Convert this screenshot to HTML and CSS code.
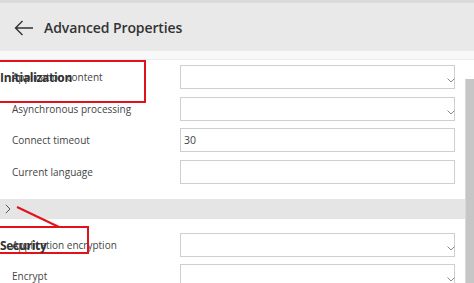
FILE: index.html
```html
<!DOCTYPE html>
<html>
<head>
<meta charset="utf-8">
<link rel="stylesheet" href="styles.css">
</head>
<body>
<div class="app">
  <header class="topbar">
    <svg class="back" width="20" height="16" viewBox="0 0 20 16"><path d="M19 8H1.5M8.5 1L1.5 8l7 7" fill="none" stroke="#333" stroke-width="1.4"/></svg>
    <h1 class="title">Advanced Properties</h1>
  </header>
  <div class="strip"></div>
  <div class="main">
    <div class="content">
      <div class="rows">
        <div class="row"><span class="label">Application content</span><div class="field select"><svg class="chev" width="8" height="5" viewBox="0 0 8 5"><path d="M0.5 0.5L4 4l3.5-3.5" fill="none" stroke="#888" stroke-width="1"/></svg></div></div>
        <div class="row"><span class="label">Asynchronous processing</span><div class="field select"><svg class="chev" width="8" height="5" viewBox="0 0 8 5"><path d="M0.5 0.5L4 4l3.5-3.5" fill="none" stroke="#888" stroke-width="1"/></svg></div></div>
        <div class="row"><span class="label">Connect timeout</span><div class="field text">30</div></div>
        <div class="row"><span class="label">Current language</span><div class="field text"></div></div>
      </div>
      <div class="section">
        <svg width="6" height="10" viewBox="0 0 6 10"><path d="M0.8 0.8L5 5L0.8 9.2" fill="none" stroke="#555" stroke-width="1"/></svg>
      </div>
      <div class="rows">
        <div class="row"><span class="label">Application encryption</span><div class="field select"><svg class="chev" width="8" height="5" viewBox="0 0 8 5"><path d="M0.5 0.5L4 4l3.5-3.5" fill="none" stroke="#888" stroke-width="1"/></svg></div></div>
        <div class="row"><span class="label">Encrypt</span><div class="field select"><svg class="chev" width="8" height="5" viewBox="0 0 8 5"><path d="M0.5 0.5L4 4l3.5-3.5" fill="none" stroke="#888" stroke-width="1"/></svg></div></div>
      </div>
    </div>
    <div class="scrollbar"></div>
  </div>

  <div class="note note-init"><span class="note-text">Initialization</span></div>
  <div class="note note-sec"><span class="note-text">Security</span></div>
  <svg class="pointer" width="60" height="30" viewBox="0 0 60 30"><path d="M17 207L59 227" transform="translate(0,-200)" stroke="#e0121c" stroke-width="2"/></svg>
</div>
</body>
</html>
```
FILE: styles.css
```css
html, body {
  margin: 0;
  padding: 0;
  background: #ffffff;
}
.app {
  position: relative;
  width: 474px;
  height: 283px;
  overflow: hidden;
  font-family: "Open Sans", "Noto Sans", sans-serif;
  color: #444;
}
.topbar {
  height: 48px;
  border-top: 3px solid #dadada;
  background: #e9e9e9;
  display: flex;
  align-items: center;
  padding-left: 14px;
  gap: 10px;
}
.back {
  display: block;
  margin-top: 2px;
}
.title {
  margin: 0;
  font-size: 14px;
  font-weight: 600;
  color: #333;
  letter-spacing: -0.1px;
}
.strip {
  height: 8px;
  background: #f8f8f8;
  border-bottom: 1px solid #ededed;
}
.main {
  display: flex;
}
.content {
  width: 466px;
  padding-top: 5px;
}
.rows {
  display: flex;
  flex-direction: column;
  gap: 7.5px;
  padding-right: 10px;
}
.row {
  display: flex;
  align-items: center;
  height: 24px;
}
.label {
  flex: 0 0 180px;
  padding-left: 12px;
  box-sizing: border-box;
  font-size: 10px;
  color: #444;
}
.field {
  flex: 1;
  height: 24px;
  box-sizing: border-box;
  border: 1px solid #cfcfcf;
  background: #fff;
  font-size: 10.5px;
  color: #444;
  display: flex;
}
.field.text {
  align-items: center;
  padding-left: 3px;
}
.field.select {
  justify-content: flex-end;
  align-items: flex-end;
  padding: 0 0 5px 0;
}
.chev {
  display: block;
  margin-right: -1px;
}
.section {
  height: 20px;
  margin: 15px 0 14px 0;
  background: #e5e5e5;
  display: flex;
  align-items: center;
  padding-left: 5px;
}
.section svg {
  display: block;
}
.scrollbar {
  width: 8px;
  margin-top: 19px;
  height: 220px;
  background: #c6c6c6;
  border-left: 1px solid #d8d8d8;
}
.note {
  position: absolute;
  left: 0;
  box-sizing: border-box;
  border: 2px solid #e0121c;
  border-left: none;
}
.note-init {
  top: 60px;
  width: 146px;
  height: 43px;
}
.note-sec {
  top: 226px;
  width: 89px;
  height: 28px;
}
.note-text {
  position: absolute;
  left: 0;
  font-size: 12px;
  font-weight: 700;
  color: #333;
  letter-spacing: -0.3px;
}
.note-init .note-text {
  top: 7px;
}
.note-sec .note-text {
  top: 9px;
}
.pointer {
  position: absolute;
  left: 0;
  top: 200px;
}
```
